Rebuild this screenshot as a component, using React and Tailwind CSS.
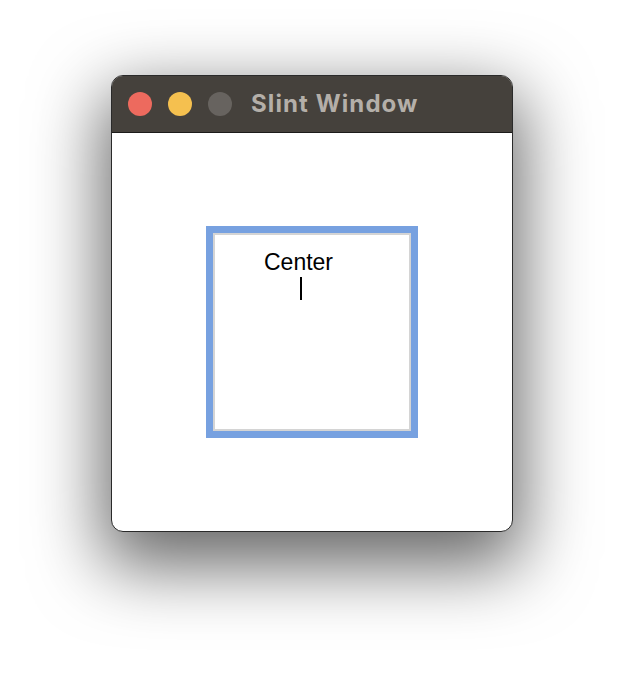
export default function App() {
  return (
    <div className="min-h-[680px] w-[624px] bg-white pt-[75px] pl-[111px]">
      <div className="flex h-[457px] w-[402px] flex-col overflow-hidden rounded-[12px] border border-[#2a2a2a] bg-white shadow-[0_26px_70px_8px_rgba(0,0,0,0.6)]">
        <div className="flex h-[57px] shrink-0 items-center border-b border-[#1c1b1a] bg-[#45413c] pl-[16px]">
          <div className="flex items-center gap-[16px]">
            <span className="h-[24px] w-[24px] rounded-full bg-[#ed6a5e]" />
            <span className="h-[24px] w-[24px] rounded-full bg-[#f5c04f]" />
            <span className="h-[24px] w-[24px] rounded-full bg-[#67635f]" />
          </div>
          <span className="ml-[19px] text-[24px] font-bold leading-none tracking-[1.1px] text-[#b4afa9] [font-family:Inter,'Liberation_Sans',sans-serif]">
            Slint Window
          </span>
        </div>
        <div className="flex flex-1 items-center justify-center">
          <div className="h-[212px] w-[212px] border-[7px] border-[#77a1e0]">
            <div className="h-full w-full border-2 border-[#d4d4d4] bg-white">
              <div className="pl-[49px] pt-[16px] text-[23px] leading-[23px] text-black [font-family:'Liberation_Sans',Arial,sans-serif]">
                Center
              </div>
              <div className="ml-[85px] mt-[3px] h-[23px] w-[2px] bg-black" />
            </div>
          </div>
        </div>
      </div>
    </div>
  );
}
